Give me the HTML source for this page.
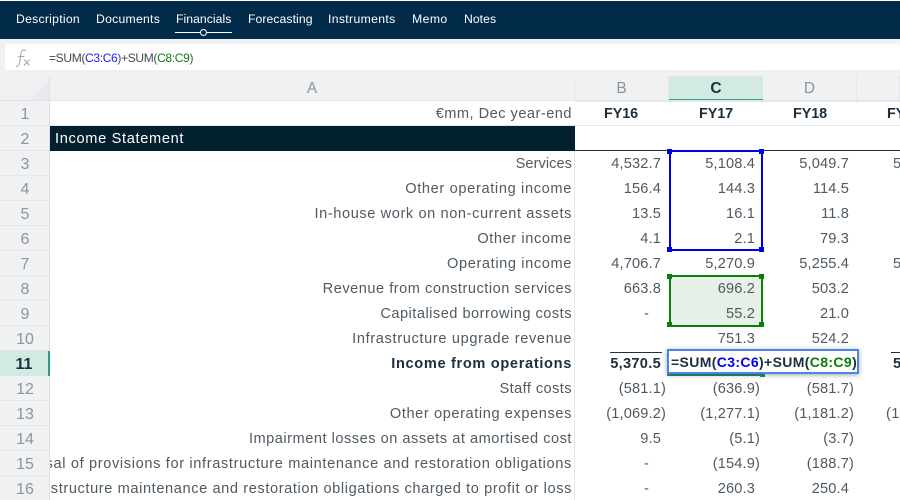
<!DOCTYPE html>
<html><head><meta charset="utf-8">
<style>
*{box-sizing:border-box;margin:0;padding:0}
html,body{width:900px;height:500px;overflow:hidden;background:#fff;font-family:"Liberation Sans",sans-serif}
#p{position:relative;width:900px;height:500px;overflow:hidden;background:#fff}
.a{position:absolute}
.t{position:absolute;white-space:nowrap;height:25px;line-height:27px;font-size:14.6px;color:#4f5a63;text-align:right;letter-spacing:.42px}
.l{right:328px}
.b{right:239px;letter-spacing:.15px}.c{right:145px;letter-spacing:.15px}.d{right:51px;letter-spacing:.15px}.e{left:893px;text-align:left}
.bd{font-weight:bold;color:#1b2f3e;letter-spacing:.3px}
.fy{font-size:14.4px;letter-spacing:-.1px}
.n{position:absolute;left:0;width:50px;text-align:center;font-size:16px;line-height:27px;height:25px;color:#8c959c;background:#f0f1f3;border-bottom:1px solid #e6e7ea}
.nav{position:absolute;top:11px;font-size:12.2px;color:#fff;letter-spacing:.27px;line-height:16px;white-space:nowrap}
.h{position:absolute;top:76px;height:25px;line-height:26px;text-align:center;font-size:15.5px;color:#8c959c;background:#f0f1f3;border-right:1px solid #e6e7ea}
.hd{position:absolute;width:5px;height:5px}
</style></head><body><div id="p">
<div class="a" style="left:0;top:1px;width:900px;height:38px;background:#022b4a"></div>
<div class="nav" style="left:16px">Description</div>
<div class="nav" style="left:96px">Documents</div>
<div class="nav" style="left:176px;letter-spacing:.05px">Financials</div>
<div class="nav" style="left:248px;letter-spacing:.08px">Forecasting</div>
<div class="nav" style="left:328px;letter-spacing:.35px">Instruments</div>
<div class="nav" style="left:412px;letter-spacing:.45px">Memo</div>
<div class="nav" style="left:464px;letter-spacing:.05px">Notes</div>
<div class="a" style="left:175px;top:32px;width:57px;height:1px;background:#fff"></div>
<div class="a" style="left:200px;top:29px;width:7px;height:7px;border:1px solid #fff;border-radius:50%;background:#022b4a"></div>

<div class="a" style="left:0;top:39px;width:900px;height:37px;background:#f0f1f3"></div>
<div class="a" style="left:5px;top:44px;width:895px;height:26px;background:#fff;border-radius:3px"></div>
<svg class="a" style="left:0;top:40px" width="40" height="30" fill="none" stroke="#a8adb2" stroke-width="1.1"><path d="M26 10.5C23 9 21.5 10.5 21 13.5L19.5 23C19 26 17.5 27 16 26"/><path d="M18 16.5H24.5"/><path d="M24 19.5L29.5 25.5M29.5 19.5L24 25.5"/></svg>
<div class="a" style="left:49px;top:50px;font-size:12px;line-height:16px;color:#3f4a53;white-space:nowrap;letter-spacing:-.33px">=SUM(<span style="color:#2020ee">C3:C6</span>)+SUM(<span style="color:#0a7d0a">C8:C9</span>)</div>

<div class="a" style="left:0;top:76px;width:50px;height:25px;background:#f0f1f3;border-right:1px solid #dfe1e4;border-bottom:1px solid #dfe1e4"></div>
<svg class="a" style="left:30px;top:80px" width="19" height="20"><polygon points="19,0 19,20 0,20" fill="#e9eaed"/></svg>
<div class="h" style="left:50px;width:525px">A</div>
<div class="h" style="left:575px;width:94px">B</div>
<div class="h" style="left:669px;width:94px;background:#d3e9e4;color:#1b2f3e;font-weight:bold;border-right:0;border-bottom:2px solid #2b9c87;line-height:25px">C</div>
<div class="h" style="left:763px;width:94px">D</div>
<div class="h" style="left:857px;width:43px"></div>
<div class="a" style="left:50px;top:100px;width:850px;height:1px;background:#e6e7ea"></div>
<div class="a" style="left:575px;top:101px;width:325px;height:1px;background:#e6e7ea"></div>
<div class="a" style="left:50px;top:125px;width:850px;height:1px;background:#e6e7ea"></div>

<div class="n" style="top:101px">1</div><div class="n" style="top:126px">2</div><div class="n" style="top:151px">3</div><div class="n" style="top:176px">4</div><div class="n" style="top:201px">5</div><div class="n" style="top:226px">6</div><div class="n" style="top:251px">7</div><div class="n" style="top:276px">8</div><div class="n" style="top:301px">9</div><div class="n" style="top:326px">10</div>
<div class="n" style="top:351px;background:#d3e9e4;color:#1b2f3e;font-weight:bold;border-right:2px solid #2b9c87;border-bottom:0">11</div>
<div class="n" style="top:376px">12</div><div class="n" style="top:401px">13</div><div class="n" style="top:426px">14</div><div class="n" style="top:451px">15</div><div class="n" style="top:476px">16</div>
<div class="a" style="left:49px;top:101px;width:1px;height:250px;background:#dfe1e4"></div>
<div class="a" style="left:49px;top:376px;width:1px;height:124px;background:#dfe1e4"></div>

<div class="a" style="left:50px;top:126px;width:525px;height:25px;background:#03202f"></div>
<div class="t" style="left:55px;top:126px;color:#fff;text-align:left;letter-spacing:.67px">Income Statement</div>
<div class="a" style="left:575px;top:150px;width:325px;height:1px;background:#1b2f3e"></div>
<div class="a" style="left:574px;top:151px;width:1px;height:349px;background:#e6e7ea"></div>

<div class="t l" style="top:101px;letter-spacing:.48px">€mm, Dec year-end</div>
<div class="t bd fy" style="top:101px;right:262px">FY16</div><div class="t bd fy" style="top:101px;right:167px">FY17</div><div class="t bd fy" style="top:101px;right:73px">FY18</div><div class="t bd fy" style="top:101px;left:887px;text-align:left">FY</div>

<div class="t l" style="top:151px;letter-spacing:.05px">Services</div><div class="t b" style="top:151px">4,532.7</div><div class="t c" style="top:151px">5,108.4</div><div class="t d" style="top:151px">5,049.7</div><div class="t e" style="top:151px">5</div>
<div class="t l" style="top:176px;letter-spacing:.65px">Other operating income</div><div class="t b" style="top:176px">156.4</div><div class="t c" style="top:176px">144.3</div><div class="t d" style="top:176px">114.5</div>
<div class="t l" style="top:201px;letter-spacing:.59px">In-house work on non-current assets</div><div class="t b" style="top:201px">13.5</div><div class="t c" style="top:201px">16.1</div><div class="t d" style="top:201px">11.8</div>
<div class="t l" style="top:226px;letter-spacing:.59px">Other income</div><div class="t b" style="top:226px">4.1</div><div class="t c" style="top:226px">2.1</div><div class="t d" style="top:226px">79.3</div>
<div class="t l" style="top:251px;letter-spacing:.61px">Operating income</div><div class="t b" style="top:251px">4,706.7</div><div class="t c" style="top:251px">5,270.9</div><div class="t d" style="top:251px">5,255.4</div><div class="t e" style="top:251px">5</div>

<div class="a" style="left:669px;top:276px;width:94px;height:50px;background:#e6f0e6"></div>
<div class="t l" style="top:276px;letter-spacing:.51px">Revenue from construction services</div><div class="t b" style="top:276px">663.8</div><div class="t c" style="top:276px">696.2</div><div class="t d" style="top:276px">503.2</div>
<div class="t l" style="top:301px;letter-spacing:.49px">Capitalised borrowing costs</div><div class="t b" style="top:301px;right:251px">-</div><div class="t c" style="top:301px">55.2</div><div class="t d" style="top:301px">21.0</div>
<div class="t l" style="top:326px;letter-spacing:.65px">Infrastructure upgrade revenue</div><div class="t c" style="top:326px">751.3</div><div class="t d" style="top:326px">524.2</div>

<div class="t l bd" style="top:351px;letter-spacing:.66px">Income from operations</div>
<div class="a" style="left:610px;top:352px;width:52px;height:1px;background:#1b2f3e"></div>
<div class="a" style="left:763px;top:352px;width:94px;height:1px;background:#1b2f3e"></div>
<div class="a" style="left:891px;top:352px;width:9px;height:1px;background:#1b2f3e"></div>
<div class="t b bd" style="top:351px;letter-spacing:.3px">5,370.5</div><div class="t e bd" style="top:351px">5</div>

<div class="t l" style="top:376px">Staff costs</div><div class="t b" style="top:376px;right:234px">(581.1)</div><div class="t c" style="top:376px;right:140px">(636.9)</div><div class="t d" style="top:376px;right:46px">(581.7)</div>
<div class="t l" style="top:401px;letter-spacing:.59px">Other operating expenses</div><div class="t b" style="top:401px;right:234px">(1,069.2)</div><div class="t c" style="top:401px;right:140px">(1,277.1)</div><div class="t d" style="top:401px;right:46px">(1,181.2)</div><div class="t" style="top:401px;left:886px;text-align:left">(1</div>
<div class="t l" style="top:426px;letter-spacing:.51px">Impairment losses on assets at amortised cost</div><div class="t b" style="top:426px">9.5</div><div class="t c" style="top:426px;right:140px">(5.1)</div><div class="t d" style="top:426px;right:46px">(3.7)</div>
<div class="a" style="left:50px;top:451px;width:524px;height:49px;overflow:hidden">
<div class="t" style="top:0;right:2px;letter-spacing:.64px">Reversal of provisions for infrastructure maintenance and restoration obligations</div>
<div class="t" style="top:25px;right:2px;letter-spacing:.6px">Infrastructure maintenance and restoration obligations charged to profit or loss</div>
</div>
<div class="t b" style="top:451px;right:251px">-</div><div class="t c" style="top:451px;right:140px">(154.9)</div><div class="t d" style="top:451px;right:46px">(188.7)</div>
<div class="t b" style="top:476px;right:251px">-</div><div class="t c" style="top:476px">260.3</div><div class="t d" style="top:476px">250.4</div>

<div class="a" style="left:669px;top:150px;width:94px;height:101px;border:2px solid #0000e6"></div>
<div class="hd" style="left:667px;top:149px;background:#0000e6"></div><div class="hd" style="left:759px;top:149px;background:#0000e6"></div><div class="hd" style="left:667px;top:247px;background:#0000e6"></div><div class="hd" style="left:759px;top:247px;background:#0000e6"></div>
<div class="a" style="left:669px;top:275px;width:94px;height:52px;border:2px solid #0a7d0a"></div>
<div class="hd" style="left:667px;top:274px;background:#0a7d0a"></div><div class="hd" style="left:759px;top:274px;background:#0a7d0a"></div><div class="hd" style="left:667px;top:322px;background:#0a7d0a"></div><div class="hd" style="left:759px;top:322px;background:#0a7d0a"></div>

<div class="a" style="left:667px;top:374px;width:98px;height:2px;background:#2b8c78"></div>
<div class="a" style="left:760px;top:374px;width:5px;height:3px;background:#2b8c78"></div>
<div class="a" style="left:667px;top:349px;width:192px;height:25px;background:#fff;border:2px solid #4a86e8;box-shadow:0 1px 5px rgba(0,0,0,.35);font-weight:bold;font-size:14px;line-height:22px;padding-left:2px;color:#1b2f3e;white-space:nowrap;letter-spacing:.36px">=SUM(<span style="color:#0000e6">C3:C6</span>)+SUM(<span style="color:#0a7d0a">C8:C9</span>)</div>
</div></body></html>
